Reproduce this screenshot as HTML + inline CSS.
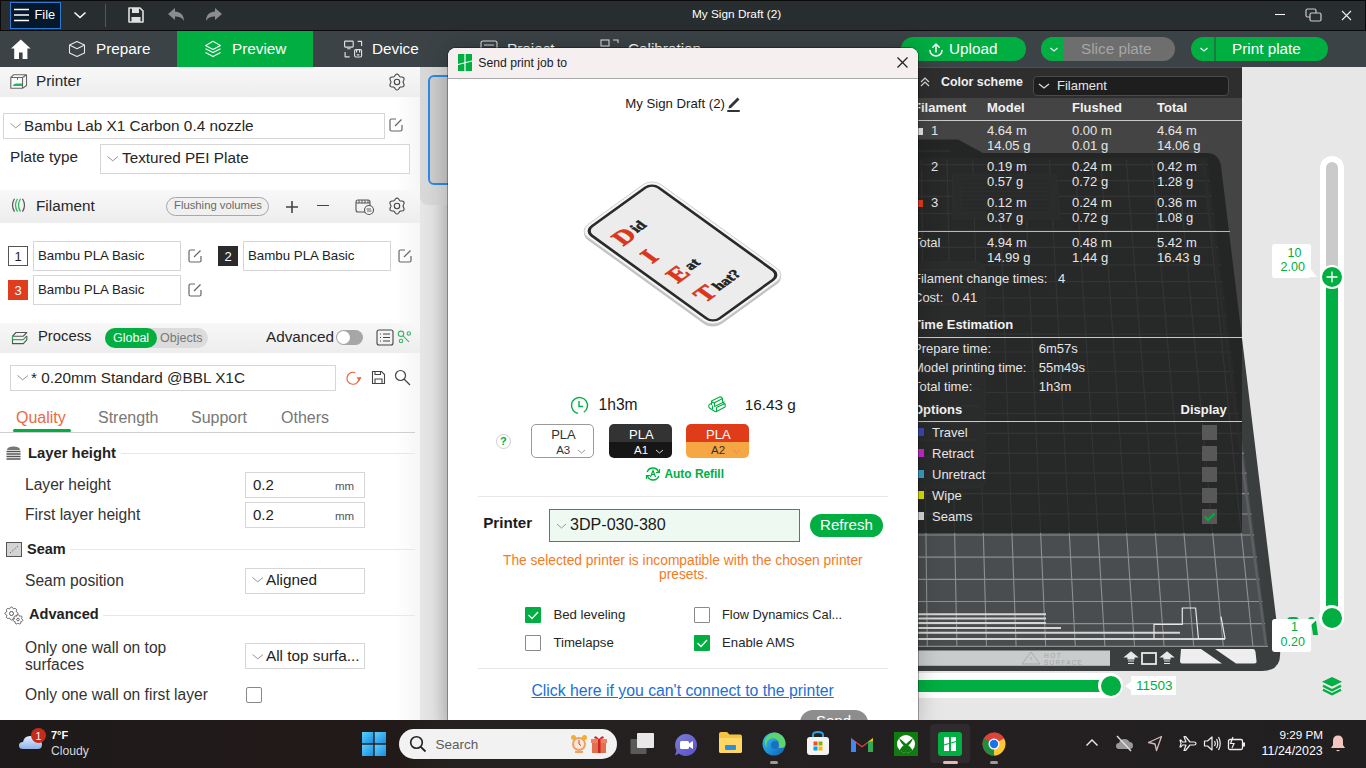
<!DOCTYPE html>
<html><head><meta charset="utf-8">
<style>
*{box-sizing:border-box;margin:0;padding:0}
html,body{width:1366px;height:768px;overflow:hidden;background:#e7e7e7;font-family:"Liberation Sans",sans-serif;}
.a{position:absolute}
.t{position:absolute;white-space:nowrap;line-height:1}
#titlebar{left:0;top:0;width:1366px;height:31px;background:#282d2f;box-shadow:inset 1px 1px 0 #0a0a0a,inset -1px -1px 0 #0a0a0a}
#nav{left:0;top:31px;width:1366px;height:36px;background:#3b4346}
#left{left:0;top:67px;width:420px;height:653px;background:#fff}
#canvas{left:0;top:0;width:1366px;height:720px;background:#e7e7e7;overflow:hidden}
#dialog{left:448px;top:48px;width:470px;height:680px;background:#fff;border-radius:8px 8px 0 0;overflow:hidden;box-shadow:0 0 0 1px rgba(0,0,0,0.3),0 0 24px rgba(0,0,0,0.22)}
#taskbar{left:0;top:720px;width:1366px;height:48px;background:linear-gradient(90deg,#1e1a1b 0%,#221a1a 18%,#221a19 29%,#252120 33%,#242021 60%,#221f21 100%)}
.hdr{background:#f3f3f3}
.box{position:absolute;border:1px solid #d0d0d0;background:#fff}
</style></head><body>
<div id="canvas" class="a">
<div class="a" style="left:420px;top:67px;width:40px;height:138px;background:#d8d8d8;border-radius:0 0 0 8px"></div>
<div class="a" style="left:428px;top:75px;width:40px;height:110px;border:2px solid #2b8ae8;border-radius:6px;background:linear-gradient(90deg,#cfcfcf,#bdbdbd)"></div>
<div class="a" style="left:420px;top:205px;width:28px;height:515px;background:linear-gradient(90deg,#e6e6e6 0%,#e3e3e3 50%,#cfcfcf 100%)"></div>
<svg class="a" style="left:0;top:0" width="1366" height="720">
<path d="M470 139.5 L958 139.5 L983 153 L1206 153 Q1219 153 1221 166 L1280 650 Q1282 671 1262 671 L470 671 Z" fill="#3b3e3f"/><line x1="470" y1="151" x2="950" y2="151" stroke="#8e9090" stroke-width="1.2"/>
<path d="M470 158 L1207 158 L1268 646.5 L470 646.5 Z" fill="#4a4d4f"/>
<line x1="470" y1="164.6" x2="1207.8" y2="164.6" stroke="#8e9090" stroke-width="1.2"/>
<line x1="470" y1="180.6" x2="1209.8" y2="180.6" stroke="#8e9090" stroke-width="1.2"/>
<line x1="470" y1="196.3" x2="1211.8" y2="196.3" stroke="#8e9090" stroke-width="1.2"/>
<line x1="470" y1="213.5" x2="1213.9" y2="213.5" stroke="#8e9090" stroke-width="1.2"/>
<line x1="470" y1="230.5" x2="1216.1" y2="230.5" stroke="#8e9090" stroke-width="1.2"/>
<line x1="470" y1="247.3" x2="1218.2" y2="247.3" stroke="#8e9090" stroke-width="1.2"/>
<line x1="470" y1="265" x2="1220.4" y2="265" stroke="#8e9090" stroke-width="1.2"/>
<line x1="470" y1="281.7" x2="1222.4" y2="281.7" stroke="#8e9090" stroke-width="1.2"/>
<line x1="470" y1="298" x2="1224.5" y2="298" stroke="#8e9090" stroke-width="1.2"/>
<line x1="470" y1="316" x2="1226.7" y2="316" stroke="#8e9090" stroke-width="1.2"/>
<line x1="470" y1="334" x2="1229.0" y2="334" stroke="#8e9090" stroke-width="1.2"/>
<line x1="470" y1="352" x2="1231.2" y2="352" stroke="#8e9090" stroke-width="1.2"/>
<line x1="470" y1="371.5" x2="1233.7" y2="371.5" stroke="#8e9090" stroke-width="1.2"/>
<line x1="470" y1="392.5" x2="1236.3" y2="392.5" stroke="#8e9090" stroke-width="1.2"/>
<line x1="470" y1="413.5" x2="1238.9" y2="413.5" stroke="#8e9090" stroke-width="1.2"/>
<line x1="470" y1="433.4" x2="1241.4" y2="433.4" stroke="#8e9090" stroke-width="1.2"/>
<line x1="470" y1="453.3" x2="1243.9" y2="453.3" stroke="#8e9090" stroke-width="1.2"/>
<line x1="470" y1="473.2" x2="1246.4" y2="473.2" stroke="#8e9090" stroke-width="1.2"/>
<line x1="470" y1="493.6" x2="1248.9" y2="493.6" stroke="#8e9090" stroke-width="1.2"/>
<line x1="470" y1="514" x2="1251.5" y2="514" stroke="#8e9090" stroke-width="1.2"/>
<line x1="470" y1="535" x2="1254.1" y2="535" stroke="#8e9090" stroke-width="1.2"/>
<line x1="470" y1="557.2" x2="1256.8" y2="557.2" stroke="#8e9090" stroke-width="1.2"/>
<line x1="470" y1="579.4" x2="1259.6" y2="579.4" stroke="#8e9090" stroke-width="1.2"/>
<line x1="470" y1="601.5" x2="1262.4" y2="601.5" stroke="#8e9090" stroke-width="1.2"/>
<line x1="470" y1="623.6" x2="1265.1" y2="623.6" stroke="#8e9090" stroke-width="1.2"/>
<line x1="470" y1="646.3" x2="1268.0" y2="646.3" stroke="#8e9090" stroke-width="1.2"/>
<line x1="511.8" y1="160" x2="453.7" y2="646.3" stroke="#8e9090" stroke-width="1.1"/>
<line x1="537.4" y1="160" x2="483.3" y2="646.3" stroke="#8e9090" stroke-width="1.1"/>
<line x1="563.0" y1="160" x2="512.9" y2="646.3" stroke="#8e9090" stroke-width="1.1"/>
<line x1="588.6" y1="160" x2="542.5" y2="646.3" stroke="#8e9090" stroke-width="1.1"/>
<line x1="614.2" y1="160" x2="572.1" y2="646.3" stroke="#8e9090" stroke-width="1.1"/>
<line x1="639.8" y1="160" x2="601.7" y2="646.3" stroke="#8e9090" stroke-width="1.1"/>
<line x1="665.4" y1="160" x2="631.3" y2="646.3" stroke="#8e9090" stroke-width="1.1"/>
<line x1="691.0" y1="160" x2="660.9" y2="646.3" stroke="#8e9090" stroke-width="1.1"/>
<line x1="716.6" y1="160" x2="690.5" y2="646.3" stroke="#8e9090" stroke-width="1.1"/>
<line x1="742.2" y1="160" x2="720.1" y2="646.3" stroke="#8e9090" stroke-width="1.1"/>
<line x1="767.8" y1="160" x2="749.7" y2="646.3" stroke="#8e9090" stroke-width="1.1"/>
<line x1="793.4" y1="160" x2="779.3" y2="646.3" stroke="#8e9090" stroke-width="1.1"/>
<line x1="819.0" y1="160" x2="808.9" y2="646.3" stroke="#8e9090" stroke-width="1.1"/>
<line x1="844.6" y1="160" x2="838.5" y2="646.3" stroke="#8e9090" stroke-width="1.1"/>
<line x1="870.2" y1="160" x2="868.1" y2="646.3" stroke="#8e9090" stroke-width="1.1"/>
<line x1="895.8" y1="160" x2="897.7" y2="646.3" stroke="#8e9090" stroke-width="1.1"/>
<line x1="921.4" y1="160" x2="927.3" y2="646.3" stroke="#8e9090" stroke-width="1.1"/>
<line x1="947.1" y1="160" x2="956.9" y2="646.3" stroke="#8e9090" stroke-width="1.1"/>
<line x1="972.7" y1="160" x2="986.5" y2="646.3" stroke="#8e9090" stroke-width="1.1"/>
<line x1="998.3" y1="160" x2="1016.1" y2="646.3" stroke="#8e9090" stroke-width="1.1"/>
<line x1="1023.9" y1="160" x2="1045.7" y2="646.3" stroke="#8e9090" stroke-width="1.1"/>
<line x1="1049.5" y1="160" x2="1075.3" y2="646.3" stroke="#8e9090" stroke-width="1.1"/>
<line x1="1075.1" y1="160" x2="1104.9" y2="646.3" stroke="#8e9090" stroke-width="1.1"/>
<line x1="1100.7" y1="160" x2="1134.5" y2="646.3" stroke="#8e9090" stroke-width="1.1"/>
<line x1="1126.3" y1="160" x2="1164.1" y2="646.3" stroke="#8e9090" stroke-width="1.1"/>
<line x1="1151.9" y1="160" x2="1193.7" y2="646.3" stroke="#8e9090" stroke-width="1.1"/>
<line x1="1177.5" y1="160" x2="1223.3" y2="646.3" stroke="#8e9090" stroke-width="1.1"/>
<line x1="1203.1" y1="160" x2="1252.9" y2="646.3" stroke="#8e9090" stroke-width="1.1"/>
<path d="M1203 160 L1266 646" stroke="#5d6061" stroke-width="2.5"/>
<path d="M952.5 174.7 H1056.4 L1060 219 H953Z" fill="#5c5f60" stroke="#6e7172"/><rect x="962" y="180" width="88" height="33" fill="#505354"/><line x1="962" y1="183.0" x2="1050" y2="183.0" stroke="#6a6d6e" stroke-width="1"/><line x1="962" y1="187.2" x2="1050" y2="187.2" stroke="#6a6d6e" stroke-width="1"/><line x1="962" y1="191.4" x2="1050" y2="191.4" stroke="#6a6d6e" stroke-width="1"/><line x1="962" y1="195.6" x2="1050" y2="195.6" stroke="#6a6d6e" stroke-width="1"/><line x1="962" y1="199.8" x2="1050" y2="199.8" stroke="#6a6d6e" stroke-width="1"/><line x1="962" y1="204.0" x2="1050" y2="204.0" stroke="#6a6d6e" stroke-width="1"/><line x1="962" y1="208.2" x2="1050" y2="208.2" stroke="#6a6d6e" stroke-width="1"/><line x1="962" y1="212.4" x2="1050" y2="212.4" stroke="#6a6d6e" stroke-width="1"/>
<path d="M880 262 H975 Q985 262 985 272 V478 Q985 488 975 488 H880Z" fill="#5c5f60" stroke="#727576"/>
<line x1="880" y1="270" x2="980" y2="270" stroke="#74777a" stroke-width="1.5"/>
<line x1="880" y1="287" x2="980" y2="287" stroke="#74777a" stroke-width="1.5"/>
<line x1="880" y1="304" x2="980" y2="304" stroke="#74777a" stroke-width="1.5"/>
<line x1="880" y1="321" x2="980" y2="321" stroke="#74777a" stroke-width="1.5"/>
<line x1="880" y1="338" x2="980" y2="338" stroke="#74777a" stroke-width="1.5"/>
<line x1="880" y1="355" x2="980" y2="355" stroke="#74777a" stroke-width="1.5"/>
<line x1="880" y1="372" x2="980" y2="372" stroke="#74777a" stroke-width="1.5"/>
<line x1="880" y1="389" x2="980" y2="389" stroke="#74777a" stroke-width="1.5"/>
<line x1="880" y1="406" x2="980" y2="406" stroke="#74777a" stroke-width="1.5"/>
<line x1="880" y1="423" x2="980" y2="423" stroke="#74777a" stroke-width="1.5"/>
<line x1="880" y1="440" x2="980" y2="440" stroke="#74777a" stroke-width="1.5"/>
<line x1="880" y1="457" x2="980" y2="457" stroke="#74777a" stroke-width="1.5"/>
<line x1="470" y1="614.3" x2="1046" y2="614.3" stroke="#d6d6d6" stroke-width="2"/>
<line x1="470" y1="618.4" x2="1046" y2="618.4" stroke="#d6d6d6" stroke-width="2"/>
<line x1="470" y1="622.9" x2="1046" y2="622.9" stroke="#d6d6d6" stroke-width="2"/>
<line x1="470" y1="628" x2="1061" y2="628" stroke="#d6d6d6" stroke-width="2"/>
<line x1="470" y1="632.8" x2="1180" y2="632.8" stroke="#d6d6d6" stroke-width="2"/>
<line x1="470" y1="639" x2="1225" y2="639" stroke="#d6d6d6" stroke-width="2"/>
<path d="M1154 639 V624.3 H1182.3 V608 H1195.6 L1198.4 638.5 H1225 L1221 616.6" stroke="#e6e6e6" stroke-width="1.2" fill="none"/>
<rect x="470" y="650.5" width="640" height="15.3" fill="#c9cbcc"/>
<path d="M1022 664 L1031 652 L1040 664Z" stroke="#a0a3a4" stroke-width="0.8" fill="none"/><path d="M1031 657V660" stroke="#a0a3a4" stroke-width="0.8"/>
<text x="1044" y="657.5" font-family="Liberation Sans" font-size="6.5" fill="#a3a6a7" letter-spacing="1.5">HOT</text><text x="1044" y="664.5" font-family="Liberation Sans" font-size="6.5" fill="#a3a6a7" letter-spacing="1.2">SURFACE</text>
<path d="M1125 657 L1131 652 L1137 657 H1134 V659 H1128 V657Z M1128 661H1134 M1128 663.5H1134" stroke="#e8e8e8" stroke-width="1.2" fill="#e8e8e8"/>
<rect x="1142" y="653" width="14" height="11" stroke="#e8e8e8" stroke-width="1.8" fill="none"/>
<path d="M1161 657 L1167 652 L1173 657 H1170 V659 H1164 V657Z M1164 661H1170 M1164 663.5H1170" stroke="#e8e8e8" stroke-width="1.2" fill="#e8e8e8"/>
<path d="M1181 649 H1201 L1222 663.5 H1182 Q1180 663.5 1180 661Z" fill="#eeeeee"/>
<path d="M1215 649 H1253 Q1255 649 1255.5 652 L1256.5 661 Q1257 663.5 1254 663.5 H1236Z" fill="#eeeeee"/>
</svg>
<div class="a" style="left:900px;top:673px;width:222px;height:25px;border-radius:0 13px 13px 0;background:#fff"></div>
<div class="a" style="left:900px;top:680px;width:212px;height:12px;background:#00ae42"></div>
<div class="a" style="left:1098px;top:673px;width:25px;height:25px;border-radius:50%;background:#fff"></div>
<div class="a" style="left:1100.5px;top:675.5px;width:20px;height:20px;border-radius:50%;background:#00ae42"></div>
<div class="a" style="left:1131px;top:676px;width:45px;height:19px;background:#fff"></div>
<svg class="a" style="left:1125px;top:681px" width="7" height="10"><path d="M0 5L7 0V10Z" fill="#fff"/></svg>
<div class="t" style="left:1136px;top:678.6px;font-size:13.5px;color:#00ae42;font-weight:400;">11503</div>
<div class="a" style="left:1320px;top:156px;width:24px;height:474px;border-radius:12px;background:#fff"></div>
<div class="a" style="left:1326px;top:162px;width:12px;height:120px;border-radius:6px 6px 0 0;background:#cacaca"></div>
<div class="a" style="left:1326px;top:277px;width:12px;height:341px;background:#00ae42"></div>
<div class="a" style="left:1320px;top:265px;width:24px;height:24px;border-radius:50%;background:#fff"></div>
<div class="a" style="left:1322px;top:267px;width:20px;height:20px;border-radius:50%;background:#00ae42"></div>
<svg class="a" style="left:1325px;top:270px" width="14" height="14"><path d="M7 1.5V12.5M1.5 7H12.5" stroke="#fff" stroke-width="1.3"/></svg>
<div class="a" style="left:1319px;top:605px;width:25px;height:25px;border-radius:50%;background:#fff"></div>
<div class="a" style="left:1321.5px;top:607.5px;width:20px;height:20px;border-radius:50%;background:#00ae42"></div>
<div class="a" style="left:1272px;top:243.7px;width:39px;height:34px;background:#fff;border-radius:3px"></div>
<svg class="a" style="left:1306px;top:268px" width="12" height="12"><path d="M0 0H4L11 9H0Z" fill="#fff"/></svg>
<div class="t" style="left:1287.5px;top:246.5px;font-size:12.5px;color:#00ae42;font-weight:400;">10</div>
<div class="t" style="left:1280.5px;top:261.3px;font-size:12.5px;color:#00ae42;font-weight:400;">2.00</div>
<div class="a" style="left:1287px;top:616.5px;width:12px;height:4px;border-radius:6px 6px 0 0;background:#00ae42"></div>
<div class="a" style="left:1308px;top:617px;width:7px;height:4px;border-radius:6px 6px 0 0;background:#00ae42"></div>
<svg class="a" style="left:1310px;top:620px" width="9" height="16"><path d="M1 1L6 0.5L8 15H3Z" fill="#00ae42"/></svg>
<div class="a" style="left:1272px;top:619px;width:39px;height:33px;background:#fff;border-radius:3px"></div>
<svg class="a" style="left:1309px;top:618px" width="10" height="10"><path d="M0 1L9 0.5L1 8Z" fill="#fff"/></svg>
<div class="t" style="left:1291px;top:621.0px;font-size:12.5px;color:#00ae42;font-weight:400;">1</div>
<div class="t" style="left:1280.5px;top:636.0px;font-size:12.5px;color:#00ae42;font-weight:400;">0.20</div>
<svg class="a" style="left:1321px;top:675px" width="22" height="22"><path d="M11 2L21 6.8L11 11.6L1 6.8Z" fill="#00ae42"/><path d="M2 10.8L11 15.3L20 10.8 M2 14.8L11 19.3L20 14.8" stroke="#00ae42" stroke-width="2.4" fill="none" stroke-linejoin="round"/></svg>
</div>
<div id="titlebar" class="a">
 <div class="a" style="left:10px;top:2px;width:51px;height:27px;border:1px solid #2a7ad6;background:#06182b"></div>
 <svg class="a" style="left:13px;top:7px" width="18" height="16"><path d="M1 2.5H16M1 8H16M1 13.5H16" stroke="#fff" stroke-width="1.6"/></svg>
 <div class="t" style="left:34.5px;top:9px;font-size:12.8px;color:#fff">File</div>
 <svg class="a" style="left:73px;top:10px" width="14" height="10"><path d="M1.5 2.5L7 7.5L12.5 2.5" stroke="#fff" stroke-width="1.5" fill="none"/></svg>
 <div class="a" style="left:105px;top:4px;width:1px;height:23px;background:#555"></div>
 <svg class="a" style="left:127px;top:6px" width="18" height="18"><path d="M2 2H13L16 5V16H2Z" stroke="#e0e0e0" stroke-width="1.6" fill="none" stroke-linejoin="round"/><rect x="5" y="2" width="7" height="5" fill="#e0e0e0"/><rect x="4.5" y="11" width="9" height="5" fill="#e0e0e0"/></svg>
 <svg class="a" style="left:167px;top:7px" width="18" height="16"><path d="M1 7L8 1V4.5C13 4.5 17 8 17 14C15 10.5 12 9.5 8 9.5V13Z" fill="#8a8d8f"/></svg>
 <svg class="a" style="left:205px;top:7px" width="18" height="16"><path d="M17 7L10 1V4.5C5 4.5 1 8 1 14C3 10.5 6 9.5 10 9.5V13Z" fill="#8a8d8f"/></svg>
 <div class="t" style="left:692px;top:9px;font-size:11.8px;color:#fff">My Sign Draft (2)</div>
 <div class="a" style="left:1275px;top:14px;width:10px;height:1px;background:#fff"></div>
 <svg class="a" style="left:1305px;top:8px" width="18" height="14"><rect x="1" y="1" width="10" height="8" rx="1.5" stroke="#ccc" stroke-width="1.2" fill="none"/><rect x="5" y="5" width="11" height="8" rx="1.5" stroke="#ccc" stroke-width="1.2" fill="#2b2f31"/></svg>
 <svg class="a" style="left:1341px;top:10px" width="11" height="11"><path d="M1 1L10 10M10 1L1 10" stroke="#eee" stroke-width="1.1"/></svg>
</div>
<div id="nav" class="a">
 <svg class="a" style="left:10px;top:7px" width="22" height="22"><path d="M10.8 1.5L1 10.5H4.2V21H9V14.5H12.6V21H17.4V10.5H20.6Z" fill="#fff"/></svg>
 <svg class="a" style="left:68px;top:9px" width="18" height="18"><path d="M9 1.5L16.5 5V13L9 16.5L1.5 13V5Z M1.5 5L9 8.8L16.5 5" stroke="#e8e8e8" stroke-width="1.1" fill="none" stroke-linejoin="round"/></svg>
 <div class="t" style="left:96px;top:10px;font-size:15.3px;color:#fff">Prepare</div>
 <div class="a" style="left:177px;top:0;width:136px;height:36px;background:#00ae42"></div>
 <svg class="a" style="left:204px;top:8px" width="18" height="20"><path d="M9 2.2L16.5 6.6L9 10.6L1.5 6.6Z M1.5 9.8L9 13.6L16.5 9.8 M1.5 13.5L9 17.6L16.5 13.5" stroke="#fff" stroke-width="1.1" fill="none" stroke-linejoin="round"/></svg>
 <div class="t" style="left:232px;top:10px;font-size:15.3px;color:#fff">Preview</div>
 <svg class="a" style="left:343px;top:8px" width="20" height="20"><g stroke="#e2e2e2" stroke-width="1.15" fill="none" stroke-linejoin="round"><rect x="1.6" y="2.1" width="8.6" height="6" rx="0.8"/><path d="M4.2 9.7H7.6 M14.6 2.4H18.6V7 M2.1 13V17.8H6.6"/><rect x="11.6" y="10.6" width="7" height="7.4" rx="1.2"/><path d="M13.6 11V13.6 M16.6 11V13.6 M13.8 15.9H16.4"/></g></svg>
 <div class="t" style="left:372px;top:10px;font-size:15.3px;color:#fff">Device</div>
 <svg class="a" style="left:480px;top:9px" width="20" height="18"><rect x="1" y="1" width="16" height="14" rx="2" stroke="#ddd" stroke-width="1.1" fill="none"/><path d="M4 5H14M4 9H14" stroke="#ddd" stroke-width="1.1"/></svg>
 <div class="t" style="left:507px;top:10px;font-size:15.3px;color:#fff">Project</div>
 <svg class="a" style="left:600px;top:8px" width="20" height="20"><rect x="1" y="1" width="8" height="6" stroke="#ddd" stroke-width="1.1" fill="none"/><path d="M13 1H18V4 M1 14V19H5" stroke="#ddd" stroke-width="1.1" fill="none"/></svg>
 <div class="t" style="left:628px;top:10px;font-size:15.3px;color:#fff">Calibration</div>
 <div class="a" style="left:901px;top:6px;width:125px;height:24px;border-radius:12px;background:#00ae42"></div>
 <svg class="a" style="left:928px;top:9px" width="16" height="18"><path d="M8 4V12 M4.8 7.2L8 4L11.2 7.2 M2 10.5A6 5.5 0 0 0 14 10.5" stroke="#fff" stroke-width="1.5" fill="none" stroke-linecap="round"/></svg>
 <div class="t" style="left:949px;top:10px;font-size:15.3px;color:#fff">Upload</div>
 <div class="a" style="left:1041px;top:6px;width:134px;height:24px;border-radius:12px;background:#6e6e6e;overflow:hidden"><div class="a" style="left:0;top:0;width:23px;height:24px;background:#00ae42"></div></div>
 <svg class="a" style="left:1048.5px;top:15.5px" width="10" height="6"><path d="M1.5 1L5 4L8.5 1" stroke="#fff" stroke-width="1.1" fill="none"/></svg>
 <div class="t" style="left:1081px;top:10px;font-size:15.3px;color:#a6a6a6">Slice plate</div>
 <div class="a" style="left:1191px;top:6px;width:137px;height:24px;border-radius:12px;background:#00ae42"></div>
 <div class="a" style="left:1214px;top:6px;width:2px;height:24px;background:#1e7a40"></div>
 <svg class="a" style="left:1198.5px;top:15.5px" width="10" height="6"><path d="M1.5 1L5 4L8.5 1" stroke="#fff" stroke-width="1.1" fill="none"/></svg>
 <div class="t" style="left:1232px;top:10px;font-size:15.3px;color:#fff">Print plate</div>
</div>
<div id="left" class="a">
<div class="a" style="left:395px;top:0;width:25px;height:653px;background:linear-gradient(90deg,#fff,#f6f6f6)"></div>
<div class="a" style="left:0;top:0;width:420px;height:30px;background:linear-gradient(180deg,#f8f8f8,#ededed)"></div>
<svg class="a" style="left:9.5px;top:6.5px" width="18" height="16"><path d="M0.8 3.5H12.5V14.2H0.8Z M0.8 3.5L3.5 0.8H16.5L12.5 3.5 M16.5 0.8V11.5L12.5 14.2" stroke="#666" stroke-width="1.1" fill="#fafafa" stroke-linejoin="round"/><path d="M7.5 3.5V5.8" stroke="#666" stroke-width="1"/><path d="M2.6 12Q3.8 9.6 6.5 9.6H12V12Z" fill="#1db954"/></svg>
<div class="t" style="left:36px;top:5.8px;font-size:15.3px;color:#262626;font-weight:400;">Printer</div>
<svg class="a" style="left:388px;top:6px" width="18" height="18"><path d="M9.00 1.05 L9.68 1.21 L10.30 1.64 L10.81 2.24 L11.23 2.87 L11.61 3.40 L12.02 3.76 L12.54 3.94 L13.19 4.00 L13.95 4.05 L14.73 4.20 L15.41 4.51 L15.88 5.02 L16.09 5.69 L16.02 6.44 L15.76 7.19 L15.43 7.87 L15.15 8.46 L15.05 9.00 L15.15 9.54 L15.43 10.13 L15.76 10.81 L16.02 11.56 L16.09 12.31 L15.88 12.97 L15.41 13.49 L14.73 13.80 L13.95 13.95 L13.19 14.00 L12.54 14.06 L12.03 14.24 L11.61 14.60 L11.23 15.13 L10.81 15.76 L10.30 16.36 L9.68 16.79 L9.00 16.95 L8.32 16.79 L7.70 16.36 L7.19 15.76 L6.77 15.13 L6.39 14.60 L5.97 14.24 L5.46 14.06 L4.81 14.00 L4.05 13.95 L3.27 13.80 L2.59 13.49 L2.12 12.98 L1.91 12.31 L1.98 11.56 L2.24 10.81 L2.57 10.13 L2.85 9.54 L2.95 9.00 L2.85 8.46 L2.57 7.87 L2.24 7.19 L1.98 6.44 L1.91 5.69 L2.12 5.03 L2.59 4.51 L3.27 4.20 L4.05 4.05 L4.81 4.00 L5.46 3.94 L5.98 3.76 L6.39 3.40 L6.77 2.87 L7.19 2.24 L7.70 1.64 L8.32 1.21 L9.00 1.05Z" stroke="#444" stroke-width="1.1" fill="none"/><circle cx="9" cy="9" r="2.7" stroke="#444" stroke-width="1.1" fill="none"/></svg>
<div class="box" style="left:3px;top:46px;width:382px;height:26px;border-color:#d6d6d6"></div>
<svg class="a" style="left:10.0px;top:56.1px" width="12" height="6"><path d="M0.5 0.5L5.75 4.8L11 0.5" stroke="#8a8a8a" stroke-width="0.9" fill="none"/></svg>
<div class="t" style="left:24px;top:50.9px;font-size:15.3px;color:#262626;font-weight:400;">Bambu Lab X1 Carbon 0.4 nozzle</div>
<svg class="a" style="left:388px;top:50px" width="16" height="16"><path d="M8 2H3.5Q2 2 2 3.5V12.5Q2 14 3.5 14H12.5Q14 14 14 12.5V8" stroke="#666" stroke-width="1.2" fill="none"/><path d="M7 9L13.5 2.5" stroke="#666" stroke-width="1.2"/></svg>
<div class="t" style="left:10px;top:82.3px;font-size:15.3px;color:#262626;font-weight:400;">Plate type</div>
<div class="box" style="left:100px;top:77px;width:310px;height:30px;border-color:#d6d6d6"></div>
<svg class="a" style="left:106.5px;top:89.1px" width="12" height="6"><path d="M0.5 0.5L5.75 4.8L11 0.5" stroke="#8a8a8a" stroke-width="0.9" fill="none"/></svg>
<div class="t" style="left:122px;top:82.5px;font-size:15.3px;color:#262626;font-weight:400;">Textured PEI Plate</div>
<div class="a" style="left:0;top:123px;width:420px;height:33px;background:linear-gradient(180deg,#f8f8f8,#ededed)"></div>
<svg class="a" style="left:11px;top:131px" width="16" height="15"><g fill="none" stroke-width="1.2"><path d="M3.5 0.8Q-0.5 7.2 3.5 13.6" stroke="#555"/><path d="M6.5 0.8Q2.5 7.2 6.5 13.6" stroke="#2db45a"/><path d="M9.5 0.8Q5.5 7.2 9.5 13.6" stroke="#2db45a"/><path d="M11.5 0.8Q15.5 7.2 11.5 13.6" stroke="#555"/><path d="M3.5 0.8H11.5 M3.5 13.6H11.5" stroke="#555" stroke-width="0.6" opacity="0.0"/></g></svg>
<div class="t" style="left:36px;top:130.8px;font-size:15.3px;color:#262626;font-weight:400;">Filament</div>
<div class="a" style="left:166px;top:130px;width:103px;height:19px;border:1px solid #a8a8a8;border-radius:10px;background:#f0f0f0"></div>
<div class="t" style="left:174px;top:133.3px;font-size:11.3px;color:#6a6a6a;font-weight:400;">Flushing volumes</div>
<svg class="a" style="left:285px;top:132.5px" width="14" height="14"><path d="M7 1V13M1 7H13" stroke="#444" stroke-width="1.6"/></svg>
<div class="a" style="left:317px;top:138px;width:12px;height:1.3px;background:#444"></div>
<svg class="a" style="left:355px;top:131px" width="20" height="18"><rect x="1" y="2" width="14" height="12" rx="2" stroke="#555" stroke-width="1.1" fill="none"/><path d="M1 5H15 M4 2V5 M7 2V5 M10 2V5 M13 2V5" stroke="#555" stroke-width="1"/><circle cx="14" cy="12" r="4.5" stroke="#555" stroke-width="1.1" fill="#f3f3f3"/><path d="M11.5 11H16 M12 13H16.5" stroke="#555" stroke-width="0.9"/></svg>
<svg class="a" style="left:388px;top:130px" width="18" height="18"><path d="M9.00 1.05 L9.68 1.21 L10.30 1.64 L10.81 2.24 L11.23 2.87 L11.61 3.40 L12.02 3.76 L12.54 3.94 L13.19 4.00 L13.95 4.05 L14.73 4.20 L15.41 4.51 L15.88 5.02 L16.09 5.69 L16.02 6.44 L15.76 7.19 L15.43 7.87 L15.15 8.46 L15.05 9.00 L15.15 9.54 L15.43 10.13 L15.76 10.81 L16.02 11.56 L16.09 12.31 L15.88 12.97 L15.41 13.49 L14.73 13.80 L13.95 13.95 L13.19 14.00 L12.54 14.06 L12.03 14.24 L11.61 14.60 L11.23 15.13 L10.81 15.76 L10.30 16.36 L9.68 16.79 L9.00 16.95 L8.32 16.79 L7.70 16.36 L7.19 15.76 L6.77 15.13 L6.39 14.60 L5.97 14.24 L5.46 14.06 L4.81 14.00 L4.05 13.95 L3.27 13.80 L2.59 13.49 L2.12 12.98 L1.91 12.31 L1.98 11.56 L2.24 10.81 L2.57 10.13 L2.85 9.54 L2.95 9.00 L2.85 8.46 L2.57 7.87 L2.24 7.19 L1.98 6.44 L1.91 5.69 L2.12 5.03 L2.59 4.51 L3.27 4.20 L4.05 4.05 L4.81 4.00 L5.46 3.94 L5.98 3.76 L6.39 3.40 L6.77 2.87 L7.19 2.24 L7.70 1.64 L8.32 1.21 L9.00 1.05Z" stroke="#444" stroke-width="1.1" fill="none"/><circle cx="9" cy="9" r="2.7" stroke="#444" stroke-width="1.1" fill="none"/></svg>
<div class="a" style="left:8px;top:179px;width:20px;height:20px;background:#fff;border:1px solid #555;color:#222;font-size:13px;text-align:center;line-height:19px">1</div>
<div class="box" style="left:33px;top:174px;width:148px;height:30px;border-color:#d6d6d6"></div>
<div class="t" style="left:38px;top:182.2px;font-size:13.3px;color:#222;font-weight:400;">Bambu PLA Basic</div>
<svg class="a" style="left:187px;top:181px" width="16" height="16"><path d="M8 2H3.5Q2 2 2 3.5V12.5Q2 14 3.5 14H12.5Q14 14 14 12.5V8" stroke="#666" stroke-width="1.2" fill="none"/><path d="M7 9L13.5 2.5" stroke="#666" stroke-width="1.2"/></svg>
<div class="a" style="left:218px;top:179px;width:20px;height:20px;background:#2b2b2b;border:none;color:#fff;font-size:13px;text-align:center;line-height:21px">2</div>
<div class="box" style="left:243px;top:174px;width:148px;height:30px;border-color:#d6d6d6"></div>
<div class="t" style="left:248px;top:182.2px;font-size:13.3px;color:#222;font-weight:400;">Bambu PLA Basic</div>
<svg class="a" style="left:397px;top:181px" width="16" height="16"><path d="M8 2H3.5Q2 2 2 3.5V12.5Q2 14 3.5 14H12.5Q14 14 14 12.5V8" stroke="#666" stroke-width="1.2" fill="none"/><path d="M7 9L13.5 2.5" stroke="#666" stroke-width="1.2"/></svg>
<div class="a" style="left:8px;top:213px;width:20px;height:20px;background:#e03c1e;border:none;color:#fff;font-size:13px;text-align:center;line-height:21px">3</div>
<div class="box" style="left:33px;top:208px;width:148px;height:30px;border-color:#d6d6d6"></div>
<div class="t" style="left:38px;top:216.2px;font-size:13.3px;color:#222;font-weight:400;">Bambu PLA Basic</div>
<svg class="a" style="left:187px;top:215px" width="16" height="16"><path d="M8 2H3.5Q2 2 2 3.5V12.5Q2 14 3.5 14H12.5Q14 14 14 12.5V8" stroke="#666" stroke-width="1.2" fill="none"/><path d="M7 9L13.5 2.5" stroke="#666" stroke-width="1.2"/></svg>
<div class="a" style="left:0;top:256px;width:420px;height:30px;background:linear-gradient(180deg,#f8f8f8,#ededed)"></div>
<svg class="a" style="left:10.5px;top:263.5px" width="18" height="15"><g fill="none" stroke-linejoin="round" stroke-width="1.1"><path d="M1.5 5.2L5 1.5H15.8L12.3 5.2Z" stroke="#555"/><path d="M1.5 5.2V8.6H12.3L15.8 4.9" stroke="#1db954" stroke-width="1.3"/><path d="M1.5 8.6V12.6H12.3L15.8 8.9V5" stroke="#555"/></g></svg>
<div class="t" style="left:38px;top:261.7px;font-size:14.8px;color:#262626;font-weight:400;">Process</div>
<div class="a" style="left:105px;top:260.7px;width:103px;height:20.5px;border-radius:10.5px;background:#dcdcdc"></div>
<div class="a" style="left:105px;top:260.7px;width:52px;height:20.5px;border-radius:10.5px;background:#00ae42"></div>
<div class="t" style="left:113px;top:265.4px;font-size:12.5px;color:#fff;font-weight:400;">Global</div>
<div class="t" style="left:160px;top:265.4px;font-size:12.5px;color:#777;font-weight:400;">Objects</div>
<div class="t" style="left:266px;top:261.7px;font-size:15.3px;color:#262626;font-weight:400;">Advanced</div>
<div class="a" style="left:336px;top:263px;width:27px;height:15px;border-radius:8px;background:#a6a6a6"></div>
<div class="a" style="left:337px;top:264px;width:13px;height:13px;border-radius:7px;background:#fff"></div>
<svg class="a" style="left:376px;top:262px" width="18" height="17"><rect x="1" y="1" width="16" height="15" rx="2" stroke="#444" stroke-width="1.1" fill="none"/><path d="M4 5H5M4 8.5H5M4 12H5M7 5H14M7 8.5H14M7 12H14" stroke="#444" stroke-width="1.1"/></svg>
<svg class="a" style="left:396px;top:262px" width="16" height="16"><g stroke="#3cb46a" stroke-width="1.1" fill="none"><circle cx="5" cy="4.8" r="2.7"/><circle cx="12.8" cy="4.5" r="1.7"/><circle cx="5" cy="12" r="1.7"/><path d="M7 6.8L13 12.8"/></g></svg>
<div class="box" style="left:10px;top:298px;width:326px;height:26px;border-color:#d6d6d6"></div>
<svg class="a" style="left:16.5px;top:308.0px" width="12" height="6"><path d="M0.5 0.5L5.75 4.8L11 0.5" stroke="#8a8a8a" stroke-width="0.9" fill="none"/></svg>
<div class="t" style="left:31px;top:302.5px;font-size:15.3px;color:#262626;font-weight:400;">* 0.20mm Standard @BBL X1C</div>
<svg class="a" style="left:345px;top:303px" width="18" height="16"><path d="M14 8A6 6 0 1 1 10 2.6" stroke="#e8643a" stroke-width="1.2" fill="none"/><path d="M11.5 7.5L14.5 11L16.5 7" fill="#e8643a"/></svg>
<svg class="a" style="left:371px;top:303px" width="15" height="15"><path d="M1.5 1.5H10.5L13.5 4.5V13.5H1.5Z" stroke="#444" stroke-width="1.1" fill="none"/><path d="M4 1.5V4.5H9.5V1.5 M4 13.5V9H11V13.5" stroke="#444" stroke-width="1.1" fill="none"/></svg>
<svg class="a" style="left:394px;top:302px" width="17" height="17"><circle cx="6.5" cy="6.5" r="5" stroke="#444" stroke-width="1.2" fill="none"/><path d="M10 10L16 16" stroke="#444" stroke-width="1.3"/></svg>
<div class="t" style="left:16px;top:343.4px;font-size:16px;color:#ea6a3f;font-weight:400;">Quality</div>
<div class="a" style="left:13px;top:362px;width:58px;height:3px;border-radius:2px;background:#00ae42"></div>
<div class="t" style="left:98px;top:343.4px;font-size:16px;color:#777;font-weight:400;">Strength</div>
<div class="t" style="left:191px;top:343.4px;font-size:16px;color:#777;font-weight:400;">Support</div>
<div class="t" style="left:281px;top:343.4px;font-size:16px;color:#777;font-weight:400;">Others</div>
<div class="a" style="left:0;top:365px;width:415px;height:1px;background:#cfcfcf"></div>
<svg class="a" style="left:5px;top:378px" width="17" height="16"><path d="M2 5Q2 1.5 8.5 1.5Q15 1.5 15 5Z" fill="#777"/><path d="M1.5 6.5H15.5M1.5 9H15.5M1.5 11.5H15.5M1.5 14H15.5" stroke="#555" stroke-width="1.5"/></svg>
<div class="t" style="left:28px;top:378.9px;font-size:14.8px;color:#222;font-weight:700;">Layer height</div>
<div class="a" style="left:121px;top:386px;width:294px;height:1px;background:#e8e8e8"></div>
<div class="t" style="left:25px;top:410.4px;font-size:15.6px;color:#333;font-weight:400;">Layer height</div>
<div class="t" style="left:25px;top:439.8px;font-size:15.6px;color:#333;font-weight:400;">First layer height</div>
<div class="box" style="left:245px;top:405px;width:120px;height:26px;border-color:#d6d6d6"></div>
<div class="t" style="left:253px;top:410.3px;font-size:15px;color:#222;font-weight:400;">0.2</div>
<div class="t" style="left:335px;top:414.3px;font-size:11.5px;color:#555;font-weight:400;">mm</div>
<div class="box" style="left:245px;top:435px;width:120px;height:26px;border-color:#d6d6d6"></div>
<div class="t" style="left:253px;top:440.3px;font-size:15px;color:#222;font-weight:400;">0.2</div>
<div class="t" style="left:335px;top:444.3px;font-size:11.5px;color:#555;font-weight:400;">mm</div>
<svg class="a" style="left:6px;top:475px" width="16" height="15"><rect x="0.5" y="0.5" width="15" height="14" fill="#d4d4d4" stroke="#555"/><path d="M4 11L12 4" stroke="#666" stroke-width="1" stroke-dasharray="1.5 1.5"/></svg>
<div class="t" style="left:27px;top:474.7px;font-size:14.5px;color:#222;font-weight:700;">Seam</div>
<div class="a" style="left:70px;top:482px;width:345px;height:1px;background:#e8e8e8"></div>
<div class="t" style="left:25px;top:506.4px;font-size:15.6px;color:#333;font-weight:400;">Seam position</div>
<div class="box" style="left:245px;top:501px;width:120px;height:26px;border-color:#d6d6d6"></div>
<svg class="a" style="left:251.8px;top:510.0px" width="12" height="6"><path d="M0.5 0.5L5.75 4.8L11 0.5" stroke="#8a8a8a" stroke-width="0.9" fill="none"/></svg>
<div class="t" style="left:266px;top:505.0px;font-size:15.3px;color:#222;font-weight:400;">Aligned</div>
<svg class="a" style="left:4px;top:539px" width="20" height="19"><path d="M7.50 1.00 L7.92 1.07 L8.32 1.29 L8.67 1.63 L8.96 2.04 L9.20 2.48 L9.41 2.88 L9.84 2.75 L10.33 2.60 L10.83 2.52 L11.31 2.53 L11.75 2.66 L12.10 2.90 L12.34 3.25 L12.47 3.69 L12.48 4.17 L12.40 4.67 L12.25 5.16 L12.12 5.59 L12.52 5.80 L12.96 6.04 L13.37 6.33 L13.71 6.68 L13.93 7.08 L14.00 7.50 L13.93 7.92 L13.71 8.32 L13.37 8.67 L12.96 8.96 L12.52 9.20 L12.12 9.41 L12.25 9.84 L12.40 10.33 L12.48 10.83 L12.47 11.31 L12.34 11.75 L12.10 12.10 L11.75 12.34 L11.31 12.47 L10.83 12.48 L10.33 12.40 L9.84 12.25 L9.41 12.12 L9.20 12.52 L8.96 12.96 L8.67 13.37 L8.32 13.71 L7.92 13.93 L7.50 14.00 L7.08 13.93 L6.68 13.71 L6.33 13.37 L6.04 12.96 L5.80 12.52 L5.59 12.12 L5.16 12.25 L4.67 12.40 L4.17 12.48 L3.69 12.47 L3.25 12.34 L2.90 12.10 L2.66 11.75 L2.53 11.31 L2.52 10.83 L2.60 10.33 L2.75 9.84 L2.88 9.41 L2.48 9.20 L2.04 8.96 L1.63 8.67 L1.29 8.32 L1.07 7.92 L1.00 7.50 L1.07 7.08 L1.29 6.68 L1.63 6.33 L2.04 6.04 L2.48 5.80 L2.88 5.59 L2.75 5.16 L2.60 4.67 L2.52 4.17 L2.53 3.69 L2.66 3.25 L2.90 2.90 L3.25 2.66 L3.69 2.53 L4.17 2.52 L4.67 2.60 L5.16 2.75 L5.59 2.88 L5.80 2.48 L6.04 2.04 L6.33 1.63 L6.68 1.29 L7.08 1.07 L7.50 1.00Z" stroke="#555" stroke-width="1" fill="#fff"/><circle cx="7.5" cy="7.5" r="2" stroke="#555" stroke-width="1" fill="none"/><path d="M14.00 8.70 L14.36 8.76 L14.69 8.94 L14.98 9.22 L15.22 9.56 L15.40 9.93 L15.56 10.26 L15.92 10.18 L16.32 10.09 L16.74 10.07 L17.14 10.12 L17.48 10.27 L17.75 10.51 L17.93 10.82 L17.99 11.20 L17.96 11.59 L17.84 11.99 L17.67 12.37 L17.51 12.70 L17.79 12.93 L18.11 13.19 L18.39 13.50 L18.60 13.84 L18.70 14.21 L18.68 14.57 L18.54 14.90 L18.29 15.18 L17.96 15.41 L17.57 15.56 L17.17 15.66 L16.81 15.74 L16.81 16.11 L16.80 16.52 L16.74 16.93 L16.60 17.31 L16.38 17.61 L16.08 17.82 L15.74 17.92 L15.36 17.90 L14.98 17.78 L14.61 17.58 L14.29 17.33 L14.00 17.10 L13.71 17.33 L13.39 17.58 L13.02 17.78 L12.64 17.90 L12.26 17.92 L11.92 17.82 L11.62 17.61 L11.40 17.31 L11.26 16.93 L11.20 16.52 L11.19 16.11 L11.19 15.74 L10.83 15.66 L10.43 15.56 L10.04 15.41 L9.71 15.18 L9.46 14.90 L9.32 14.57 L9.30 14.21 L9.40 13.84 L9.61 13.50 L9.89 13.19 L10.21 12.93 L10.49 12.70 L10.33 12.37 L10.16 11.99 L10.04 11.59 L10.01 11.20 L10.07 10.82 L10.25 10.51 L10.52 10.27 L10.86 10.12 L11.26 10.07 L11.68 10.09 L12.08 10.18 L12.44 10.26 L12.60 9.93 L12.78 9.56 L13.02 9.22 L13.31 8.94 L13.64 8.76 L14.00 8.70Z" stroke="#555" stroke-width="1" fill="#fff"/><circle cx="14" cy="13.5" r="1.3" stroke="#555" stroke-width="0.9" fill="none"/></svg>
<div class="t" style="left:29px;top:540.3px;font-size:14.6px;color:#222;font-weight:700;">Advanced</div>
<div class="a" style="left:103px;top:548px;width:312px;height:1px;background:#e8e8e8"></div>
<div class="t" style="left:25px;top:572.5px;font-size:15.6px;color:#333;font-weight:400;">Only one wall on top</div>
<div class="t" style="left:25px;top:589.8px;font-size:15.6px;color:#333;font-weight:400;">surfaces</div>
<div class="box" style="left:245px;top:576px;width:120px;height:26px;border-color:#d6d6d6"></div>
<svg class="a" style="left:251.5px;top:586.5px" width="12" height="6"><path d="M0.5 0.5L5.75 4.8L11 0.5" stroke="#8a8a8a" stroke-width="0.9" fill="none"/></svg>
<div class="t" style="left:266px;top:580.6px;font-size:15.3px;color:#222;font-weight:400;">All top surfa...</div>
<div class="t" style="left:25px;top:620.4px;font-size:15.6px;color:#333;font-weight:400;">Only one wall on first layer</div>
<div class="a" style="left:246px;top:620px;width:16px;height:16px;border:1px solid #888;border-radius:2px"></div>
</div>
<div id="legend" class="a" style="left:918px;top:67px;width:324px;height:466px;background:rgba(32,32,32,0.82)">
<div class="a" style="left:0;top:0;width:324px;height:31px;background:rgba(0,0,0,0.32)"></div><div class="a" style="left:0;top:0;width:324px;height:1px;background:#4c4f54"></div>
<svg class="a" style="left:0;top:8px" width="14" height="14"><path d="M3 7L7 3L11 7 M3 11L7 7L11 11" stroke="#ddd" stroke-width="1.2" fill="none"/></svg>
<div class="t" style="left:23px;top:8.7px;font-size:12.4px;color:#f0f0f0;font-weight:700;">Color scheme</div>
<div class="a" style="left:114.5px;top:8.5px;width:196.5px;height:20px;border:1px solid #4a4a4a;border-radius:4px;background:#1e1e1e"></div>
<svg class="a" style="left:120px;top:16px" width="12" height="7"><path d="M1 1L6 5L11 1" stroke="#ddd" stroke-width="1.3" fill="none"/></svg>
<div class="t" style="left:139px;top:11.9px;font-size:13px;color:#e6e6e6;font-weight:400;">Filament</div>

<div class="t" style="left:-5px;top:33.8px;font-size:13px;color:#f2f2f2;font-weight:700;">Filament</div>
<div class="t" style="left:69px;top:33.8px;font-size:13px;color:#f2f2f2;font-weight:700;">Model</div>
<div class="t" style="left:154px;top:33.8px;font-size:13px;color:#f2f2f2;font-weight:700;">Flushed</div>
<div class="t" style="left:239px;top:33.8px;font-size:13px;color:#f2f2f2;font-weight:700;">Total</div>
<div class="a" style="left:0;top:52.5px;width:324px;height:1.3px;background:#c8c8c8"></div>
<div class="a" style="left:0;top:61.2px;width:5px;height:7px;background:#e8e8e8"></div>
<div class="t" style="left:13px;top:56.7px;font-size:13px;color:#e6e6e6;font-weight:400;">1</div>
<div class="t" style="left:69px;top:56.7px;font-size:13px;color:#e6e6e6;font-weight:400;">4.64 m</div>
<div class="t" style="left:69px;top:71.7px;font-size:13px;color:#e6e6e6;font-weight:400;">14.05 g</div>
<div class="t" style="left:154px;top:56.7px;font-size:13px;color:#e6e6e6;font-weight:400;">0.00 m</div>
<div class="t" style="left:154px;top:71.7px;font-size:13px;color:#e6e6e6;font-weight:400;">0.01 g</div>
<div class="t" style="left:239px;top:56.7px;font-size:13px;color:#e6e6e6;font-weight:400;">4.64 m</div>
<div class="t" style="left:239px;top:71.7px;font-size:13px;color:#e6e6e6;font-weight:400;">14.06 g</div>
<div class="a" style="left:0;top:97.2px;width:5px;height:7px;background:#2a2a2a"></div>
<div class="t" style="left:13px;top:92.7px;font-size:13px;color:#e6e6e6;font-weight:400;">2</div>
<div class="t" style="left:69px;top:92.7px;font-size:13px;color:#e6e6e6;font-weight:400;">0.19 m</div>
<div class="t" style="left:69px;top:107.7px;font-size:13px;color:#e6e6e6;font-weight:400;">0.57 g</div>
<div class="t" style="left:154px;top:92.7px;font-size:13px;color:#e6e6e6;font-weight:400;">0.24 m</div>
<div class="t" style="left:154px;top:107.7px;font-size:13px;color:#e6e6e6;font-weight:400;">0.72 g</div>
<div class="t" style="left:239px;top:92.7px;font-size:13px;color:#e6e6e6;font-weight:400;">0.42 m</div>
<div class="t" style="left:239px;top:107.7px;font-size:13px;color:#e6e6e6;font-weight:400;">1.28 g</div>
<div class="a" style="left:0;top:133.3px;width:5px;height:7px;background:#e03c1e"></div>
<div class="t" style="left:13px;top:128.8px;font-size:13px;color:#e6e6e6;font-weight:400;">3</div>
<div class="t" style="left:69px;top:128.8px;font-size:13px;color:#e6e6e6;font-weight:400;">0.12 m</div>
<div class="t" style="left:69px;top:143.8px;font-size:13px;color:#e6e6e6;font-weight:400;">0.37 g</div>
<div class="t" style="left:154px;top:128.8px;font-size:13px;color:#e6e6e6;font-weight:400;">0.24 m</div>
<div class="t" style="left:154px;top:143.8px;font-size:13px;color:#e6e6e6;font-weight:400;">0.72 g</div>
<div class="t" style="left:239px;top:128.8px;font-size:13px;color:#e6e6e6;font-weight:400;">0.36 m</div>
<div class="t" style="left:239px;top:143.8px;font-size:13px;color:#e6e6e6;font-weight:400;">1.08 g</div>
<div class="a" style="left:0;top:163.5px;width:312px;height:1.3px;background:#b8b8b8"></div>
<div class="t" style="left:-5px;top:168.7px;font-size:13px;color:#e6e6e6;font-weight:400;">Total</div>
<div class="t" style="left:69px;top:168.7px;font-size:13px;color:#e6e6e6;font-weight:400;">4.94 m</div>
<div class="t" style="left:69px;top:183.7px;font-size:13px;color:#e6e6e6;font-weight:400;">14.99 g</div>
<div class="t" style="left:154px;top:168.7px;font-size:13px;color:#e6e6e6;font-weight:400;">0.48 m</div>
<div class="t" style="left:154px;top:183.7px;font-size:13px;color:#e6e6e6;font-weight:400;">1.44 g</div>
<div class="t" style="left:239px;top:168.7px;font-size:13px;color:#e6e6e6;font-weight:400;">5.42 m</div>
<div class="t" style="left:239px;top:183.7px;font-size:13px;color:#e6e6e6;font-weight:400;">16.43 g</div>
<div class="t" style="left:-5px;top:204.8px;font-size:13px;color:#e6e6e6;font-weight:400;">Filament change times:</div>
<div class="t" style="left:140px;top:204.8px;font-size:13px;color:#e6e6e6;font-weight:400;">4</div>
<div class="t" style="left:-5px;top:223.5px;font-size:13px;color:#e6e6e6;font-weight:400;">Cost:</div>
<div class="t" style="left:34px;top:223.5px;font-size:13px;color:#e6e6e6;font-weight:400;">0.41</div>
<div class="t" style="left:-5px;top:251.0px;font-size:13px;color:#f2f2f2;font-weight:700;">Time Estimation</div>
<div class="a" style="left:0;top:269.5px;width:324px;height:1.3px;background:#c8c8c8"></div>
<div class="t" style="left:-5px;top:275.2px;font-size:13px;color:#e6e6e6;font-weight:400;">Prepare time:</div>
<div class="t" style="left:120.70000000000005px;top:275.2px;font-size:13px;color:#e6e6e6;font-weight:400;">6m57s</div>
<div class="t" style="left:-5px;top:293.9px;font-size:13px;color:#e6e6e6;font-weight:400;">Model printing time:</div>
<div class="t" style="left:120.70000000000005px;top:293.9px;font-size:13px;color:#e6e6e6;font-weight:400;">55m49s</div>
<div class="t" style="left:-5px;top:312.6px;font-size:13px;color:#e6e6e6;font-weight:400;">Total time:</div>
<div class="t" style="left:120.70000000000005px;top:312.6px;font-size:13px;color:#e6e6e6;font-weight:400;">1h3m</div>
<div class="t" style="left:-5px;top:335.7px;font-size:13px;color:#f2f2f2;font-weight:700;">Options</div>
<div class="t" style="left:262.5px;top:335.7px;font-size:13px;color:#f2f2f2;font-weight:700;">Display</div>
<div class="a" style="left:0;top:354px;width:324px;height:1.3px;background:#c8c8c8"></div>
<div class="a" style="left:0;top:361.3px;width:5.5px;height:8px;background:#3a48b8"></div>
<div class="t" style="left:14px;top:358.8px;font-size:13px;color:#e6e6e6;font-weight:400;">Travel</div>
<div class="a" style="left:284px;top:358px;width:15px;height:15px;background:#585858"></div>
<div class="a" style="left:0;top:382.3px;width:5.5px;height:8px;background:#c828d0"></div>
<div class="t" style="left:14px;top:379.8px;font-size:13px;color:#e6e6e6;font-weight:400;">Retract</div>
<div class="a" style="left:284px;top:379px;width:15px;height:15px;background:#585858"></div>
<div class="a" style="left:0;top:403.3px;width:5.5px;height:8px;background:#3aa0c8"></div>
<div class="t" style="left:14px;top:400.8px;font-size:13px;color:#e6e6e6;font-weight:400;">Unretract</div>
<div class="a" style="left:284px;top:400px;width:15px;height:15px;background:#585858"></div>
<div class="a" style="left:0;top:424.3px;width:5.5px;height:8px;background:#e0e000"></div>
<div class="t" style="left:14px;top:421.8px;font-size:13px;color:#e6e6e6;font-weight:400;">Wipe</div>
<div class="a" style="left:284px;top:421px;width:15px;height:15px;background:#585858"></div>
<div class="a" style="left:0;top:445.3px;width:5.5px;height:8px;background:#d8d8d8"></div>
<div class="t" style="left:14px;top:442.8px;font-size:13px;color:#e6e6e6;font-weight:400;">Seams</div>
<div class="a" style="left:284px;top:442px;width:15px;height:15px;background:#585858"></div>
<svg class="a" style="left:284px;top:442px" width="15" height="15"><path d="M2.5 7.5L6 11L12.5 4.5" stroke="#00ae42" stroke-width="2" fill="none"/></svg>
</div>
<div id="dialog" class="a">
<div class="a" style="left:0.0px;top:0.0px;width:470px;height:30px;background:#f5efef"></div>
<div class="a" style="left:0.0px;top:29.5px;width:470px;height:1px;background:#a9a9a9"></div>
<svg class="a" style="left:9.600000000000023px;top:5.700000000000003px" width="14" height="17"><rect width="14" height="17" fill="#00ae42"/><path d="M7 0V17 M0 10.5L14 7" stroke="#fff" stroke-width="1.2"/></svg>
<div class="t" style="left:30.3px;top:9.2px;font-size:12.2px;color:#1a1a1a;font-weight:400;">Send print job to</div>
<svg class="a" style="left:448px;top:8px" width="13" height="13"><path d="M1.5 1.5L11.5 11.5M11.5 1.5L1.5 11.5" stroke="#222" stroke-width="1.3"/></svg>
<div class="t" style="left:177.3px;top:48.7px;font-size:13.2px;color:#1a1a1a;font-weight:400;">My Sign Draft (2)</div>
<svg class="a" style="left:278px;top:47px" width="16" height="17"><path d="M3 11L11.5 2.5L13.5 4.5L5 13L2.5 13.5Z" fill="#333"/><rect x="1" y="15" width="13" height="2" rx="1" fill="#333"/></svg>
<svg class="a" style="left:0px;top:0px" width="470" height="400"><g transform="translate(-448 -48)"><g transform="translate(0 2.5)"><g transform="matrix(0.8125,-0.5875,0.8025,0.5796,587,231)"><rect x="-5" y="-5" width="90" height="167" rx="11" fill="#c2c2c2"/></g></g><g transform="matrix(0.8125,-0.5875,0.8025,0.5796,587,231)"><rect x="-5" y="-5" width="90" height="167" rx="11" fill="#f6f6f6" stroke="#c8c8c8" stroke-width="0.8"/><rect x="-1" y="-1" width="82" height="159" rx="8" fill="#ececec" stroke="#2a2a2a" stroke-width="2.8"/><g font-family="Liberation Serif" font-weight="700"><text x="9" y="36" font-size="25" fill="#d9361b" stroke="#d9361b" stroke-width="0.8">D</text><text x="29" y="33" font-size="15" fill="#222" stroke="#222" stroke-width="0.6">id</text><text x="12" y="69" font-size="25" fill="#d9361b" stroke="#d9361b" stroke-width="0.8">I</text><text x="11" y="102" font-size="25" fill="#d9361b" stroke="#d9361b" stroke-width="0.8">E</text><text x="30" y="99" font-size="15" fill="#222" stroke="#222" stroke-width="0.6">at</text><text x="11" y="136" font-size="25" fill="#d9361b" stroke="#d9361b" stroke-width="0.8">T</text><text x="30" y="134" font-size="15" fill="#222" stroke="#222" stroke-width="0.6">hat?</text></g></g></g></svg>
<svg class="a" style="left:122px;top:348px" width="19" height="19"><circle cx="9.5" cy="9.5" r="8" stroke="#00ae42" stroke-width="1.4" fill="none" stroke-dasharray="44 6" transform="rotate(100 9.5 9.5)"/><path d="M9 5V10.5H13" stroke="#00ae42" stroke-width="1.4" fill="none"/></svg>
<div class="t" style="left:150.6px;top:348.6px;font-size:15.6px;color:#1a1a1a;font-weight:400;">1h3m</div>
<svg class="a" style="left:260px;top:348.2px" width="20" height="18"><g stroke="#00ae42" stroke-width="1.1" fill="none" stroke-linejoin="round"><path d="M3.5 5L11.5 1Q13.5 0.5 14.5 2.5L6.5 6.8Q4.5 7.2 3.5 5Z"/><path d="M3.5 5V9 M6.5 6.8V10.5 M14.5 2.5V6"/><path d="M1 8.5L3.5 7.5 M1 8.5Q0.5 11 1.5 12L7 15.5Q8 16 8.5 15.5L17 11Q17.5 10 17 8L14.5 6.2"/><path d="M6.5 10.5L16.5 5.8 M8.5 15.5V11.5 M4.5 13.2V9.5 M8.5 11.5L17 7.5"/></g></svg>
<div class="t" style="left:296.7px;top:348.8px;font-size:15.3px;color:#1a1a1a;font-weight:400;">16.43 g</div>
<div class="a" style="left:48.0px;top:385.5px;width:15px;height:15px;border:1px solid #cfcfcf;border-radius:50%"></div>
<div class="t" style="left:52.0px;top:388.2px;font-size:11px;color:#00ae42;font-weight:700;">?</div>
<div class="a" style="left:83.2px;top:376.0px;width:63px;height:34px;border-radius:5px;overflow:hidden;border:1px solid #9a9a9a;background:linear-gradient(180deg,#fff 0,#fff 52%,#fff 52%)"></div>
<div class="t" style="left:103.2px;top:379.8px;font-size:13px;color:#333;font-weight:400;">PLA</div>
<div class="t" style="left:108.2px;top:396.5px;font-size:11.5px;color:#333;font-weight:400;">A3</div>
<svg class="a" style="left:129.20000000000005px;top:401px" width="9" height="5"><path d="M1 1L4.5 4L8 1" stroke="#999" stroke-width="1" fill="none"/></svg>
<div class="a" style="left:161.0px;top:376.0px;width:63px;height:34px;border-radius:5px;overflow:hidden;border:none;background:linear-gradient(180deg,#333333 0,#333333 52%,#161616 52%)"></div>
<div class="t" style="left:181.0px;top:379.8px;font-size:13px;color:#fff;font-weight:400;">PLA</div>
<div class="t" style="left:186.0px;top:396.5px;font-size:11.5px;color:#fff;font-weight:400;">A1</div>
<svg class="a" style="left:207px;top:401px" width="9" height="5"><path d="M1 1L4.5 4L8 1" stroke="#ddd" stroke-width="1" fill="none"/></svg>
<div class="a" style="left:238.0px;top:376.0px;width:63px;height:34px;border-radius:5px;overflow:hidden;border:none;background:linear-gradient(180deg,#e03c1a 0,#e03c1a 52%,#f6a643 52%)"></div>
<div class="t" style="left:258.0px;top:379.8px;font-size:13px;color:#fff;font-weight:400;">PLA</div>
<div class="t" style="left:263.0px;top:396.5px;font-size:11.5px;color:#333;font-weight:400;">A2</div>
<svg class="a" style="left:284px;top:401px" width="9" height="5"><path d="M1 1L4.5 4L8 1" stroke="#d88" stroke-width="1" fill="none"/></svg>
<svg class="a" style="left:197px;top:418px" width="16" height="16"><path d="M13.5 6A6 6 0 0 0 2.2 6 M2.5 10A6 6 0 0 0 13.8 10" stroke="#00ae42" stroke-width="1.4" fill="none"/><path d="M14.5 3V6.5H11 M1.5 13V9.5H5" stroke="#00ae42" stroke-width="1.2" fill="none"/><path d="M5.5 11L8 4.5L10.5 11 M6.5 8.5H9.5" stroke="#00ae42" stroke-width="1.2" fill="none"/></svg>
<div class="t" style="left:216.5px;top:420.6px;font-size:11.9px;color:#00ae42;font-weight:700;">Auto Refill</div>
<div class="a" style="left:30.0px;top:448.0px;width:410px;height:1px;background:#e6e6e6"></div>
<div class="t" style="left:35.2px;top:466.9px;font-size:15.2px;color:#1a1a1a;font-weight:700;">Printer</div>
<div class="a" style="left:100.7px;top:461.0px;width:251px;height:33px;border:1.5px solid #00ae42;background:#eefaf1"></div>
<svg class="a" style="left:108px;top:475px" width="11" height="7"><path d="M1 1L5.5 5L10 1" stroke="#999" stroke-width="1" fill="none"/></svg>
<div class="t" style="left:122.0px;top:468.4px;font-size:16.1px;color:#1a1a1a;font-weight:400;">3DP-030-380</div>
<div class="a" style="left:362.0px;top:466.2px;width:73px;height:23px;border-radius:12px;background:#00ae42"></div>
<div class="t" style="left:372.0px;top:469.2px;font-size:15.1px;color:#fff;font-weight:400;">Refresh</div>
<div class="t" style="left:55.0px;top:505.8px;font-size:13.8px;color:#f47a24;font-weight:400;">The selected printer is incompatible with the chosen printer</div>
<div class="t" style="left:211.0px;top:520.3px;font-size:13.8px;color:#f47a24;font-weight:400;">presets.</div>
<div class="a" style="left:77.0px;top:559.0px;width:16px;height:16px;background:#00ae42;border-radius:1px"></div>
<svg class="a" style="left:77px;top:559px" width="16" height="16"><path d="M3.5 8L7 11.5L13 5" stroke="#fff" stroke-width="1.4" fill="none"/></svg>
<div class="t" style="left:105.4px;top:560.1px;font-size:13.2px;color:#262626;font-weight:400;">Bed leveling</div>
<div class="a" style="left:246.0px;top:559.0px;width:16px;height:16px;border:1px solid #8a8a8a;border-radius:1px;background:#fff"></div>
<div class="t" style="left:274.0px;top:560.5px;font-size:12.8px;color:#262626;font-weight:400;">Flow Dynamics Cal...</div>
<div class="a" style="left:77.0px;top:587.0px;width:16px;height:16px;border:1px solid #8a8a8a;border-radius:1px;background:#fff"></div>
<div class="t" style="left:105.4px;top:587.5px;font-size:13.2px;color:#262626;font-weight:400;">Timelapse</div>
<div class="a" style="left:246.0px;top:587.0px;width:16px;height:16px;background:#00ae42;border-radius:1px"></div>
<svg class="a" style="left:246px;top:587px" width="16" height="16"><path d="M3.5 8L7 11.5L13 5" stroke="#fff" stroke-width="1.4" fill="none"/></svg>
<div class="t" style="left:274.0px;top:587.5px;font-size:13.2px;color:#262626;font-weight:400;">Enable AMS</div>
<div class="a" style="left:30.0px;top:620.0px;width:410px;height:1px;background:#e6e6e6"></div>
<div class="t" style="left:83.4px;top:635.0px;font-size:15.8px;color:#1a6fd8;font-weight:400;text-decoration:underline">Click here if you can&#39;t connect to the printer</div>
<div class="a" style="left:352.0px;top:661.6px;width:68px;height:30px;border-radius:13px;background:#8d8d8d"></div>
<div class="t" style="left:368.0px;top:665.3px;font-size:15px;color:#fff;font-weight:400;">Send</div>
</div>

<div id="taskbar" class="a">
<svg class="a" style="left:18px;top:10px" width="28" height="22"><defs><linearGradient id="cl" x1="0" y1="0" x2="0" y2="1"><stop offset="0" stop-color="#e6f0ff"/><stop offset="1" stop-color="#8fb2ea"/></linearGradient></defs><path d="M5 19Q1 19 1 15.5Q1 12 5 12Q6 6 12 6Q17 6 19 10Q24 10 24 14.5Q24 19 19.5 19Z" fill="url(#cl)"/></svg>
<div class="a" style="left:31px;top:8px;width:15px;height:15px;border-radius:50%;background:#c42b1c"></div>
<div class="t" style="left:35.5px;top:10.6px;font-size:10.5px;color:#fff;font-weight:400;">1</div>
<div class="t" style="left:51.0px;top:9.8px;font-size:11px;color:#fff;font-weight:700;">7°F</div>
<div class="t" style="left:51.0px;top:25.2px;font-size:12.2px;color:#d8d8d8;font-weight:400;">Cloudy</div>
<svg class="a" style="left:362px;top:12px" width="24" height="24"><defs><linearGradient id="wg" x1="0" y1="0" x2="1" y2="1"><stop offset="0" stop-color="#5ad0ff"/><stop offset="1" stop-color="#1a8ae0"/></linearGradient></defs><rect x="0" y="0" width="11.3" height="11.3" fill="url(#wg)"/><rect x="12.7" y="0" width="11.3" height="11.3" fill="url(#wg)"/><rect x="0" y="12.7" width="11.3" height="11.3" fill="url(#wg)"/><rect x="12.7" y="12.7" width="11.3" height="11.3" fill="url(#wg)"/></svg>
<div class="a" style="left:399px;top:9px;width:218px;height:30px;border-radius:15px;background:#f2f2f2"></div>
<svg class="a" style="left:409px;top:15px" width="18" height="18"><circle cx="7.5" cy="7.5" r="5.8" stroke="#222" stroke-width="1.6" fill="none"/><path d="M11.8 11.8L16.5 16.5" stroke="#222" stroke-width="1.8"/></svg>
<div class="t" style="left:435.4px;top:18.1px;font-size:13.5px;color:#5c5c5c;font-weight:400;">Search</div>
<svg class="a" style="left:570px;top:14px" width="18" height="20"><circle cx="9" cy="10" r="7" fill="#f0a060"/><circle cx="9" cy="10" r="5" fill="#fde8d8"/><path d="M9 6V10L11 11.5" stroke="#c04040" stroke-width="1" fill="none"/><circle cx="3.5" cy="3.5" r="2.5" fill="#f0b030"/><circle cx="14.5" cy="3.5" r="2.5" fill="#f0b030"/><rect x="5" y="17" width="8" height="2" fill="#f0a060"/></svg>
<svg class="a" style="left:590px;top:14px" width="18" height="20"><rect x="2" y="7" width="14" height="12" fill="#e07050"/><rect x="1" y="5" width="16" height="4" fill="#f08060"/><rect x="8" y="5" width="2.5" height="14" fill="#d02020"/><path d="M9 5Q5 0 4 4Q5 5 9 5Q13 5 14 4Q13 0 9 5" fill="#d02020"/></svg>
<svg class="a" style="left:630px;top:12px" width="26" height="24"><rect x="0.5" y="7" width="16" height="15" rx="1" fill="#5a5a5a"/><rect x="7" y="1" width="17" height="15" rx="1" fill="#e8e8e8"/></svg>
<svg class="a" style="left:674px;top:13px" width="24" height="24"><defs><linearGradient id="tm" x1="0" y1="0" x2="1" y2="1"><stop offset="0" stop-color="#7b7fd8"/><stop offset="1" stop-color="#5b4fc8"/></linearGradient></defs><path d="M12 1A11 11 0 1 1 5 20.5L1 22.5L2.5 17.5A11 11 0 0 1 12 1Z" fill="url(#tm)"/><rect x="6" y="8" width="9" height="8" rx="1.5" fill="#fff"/><path d="M15 10.5L19 8V16L15 13.5Z" fill="#fff"/></svg>
<svg class="a" style="left:718px;top:11px" width="25" height="23"><path d="M1 3Q1 1 3 1H9L11.5 3.5H22Q24 3.5 24 5.5V20Q24 22 22 22H3Q1 22 1 20Z" fill="#f5c542"/><path d="M1 7H24V20Q24 22 22 22H3Q1 22 1 20Z" fill="#ffd766"/><rect x="7" y="14" width="11" height="5" rx="1" fill="#2b8ee0"/></svg>
<svg class="a" style="left:762px;top:12px" width="24" height="24"><defs><linearGradient id="ed" x1="0" y1="0" x2="1" y2="1"><stop offset="0" stop-color="#35c1f1"/><stop offset="0.6" stop-color="#1b8ad8"/><stop offset="1" stop-color="#0c59a4"/></linearGradient></defs><circle cx="12" cy="12" r="11.5" fill="url(#ed)"/><path d="M12 0.5A11.5 11.5 0 0 1 23.5 12Q23.5 16 19 16Q14 16 14 12.5Q14 10 17 10Q14 5 9 6.5Q3 9 5 16Q2 12 3 8A11.5 11.5 0 0 1 12 0.5Z" fill="#5fd36d"/><circle cx="13" cy="13" r="4" fill="#1b6fc0"/></svg>
<div class="a" style="left:770px;top:41px;width:8px;height:3px;border-radius:2px;background:#9a9a9a"></div>
<svg class="a" style="left:806px;top:11px" width="24" height="25"><path d="M7 6V4Q7 1 12 1Q17 1 17 4V6" stroke="#2ea0e0" stroke-width="2" fill="none"/><rect x="1" y="6" width="22" height="18" rx="3" fill="#f4f4f4"/><rect x="7.5" y="10.5" width="4" height="4" fill="#f25022"/><rect x="12.5" y="10.5" width="4" height="4" fill="#7fba00"/><rect x="7.5" y="15.5" width="4" height="4" fill="#00a4ef"/><rect x="12.5" y="15.5" width="4" height="4" fill="#ffb900"/></svg>
<svg class="a" style="left:850px;top:15px" width="24" height="18"><path d="M1 3L12 11L23 3V17H18V8L12 12.5L6 8V17H1Z" fill="#ea4335"/><path d="M1 3V17H6V7Z" fill="#4285f4"/><path d="M23 3V17H18V7Z" fill="#34a853"/><path d="M18 7L23 3V6Z" fill="#fbbc04"/></svg>
<svg class="a" style="left:894px;top:12px" width="24" height="24"><rect x="0" y="0" width="24" height="24" fill="#107c10"/><circle cx="12" cy="12" r="9" fill="#fff"/><path d="M5 6Q9 9 12 12Q15 9 19 6Q17 13 12 14Q7 13 5 6Z M5 19Q9 14 12 12Q15 14 19 19" fill="#107c10"/><path d="M5.5 18.5Q8.5 13 12 12Q15.5 13 18.5 18.5Q15 21 12 21Q9 21 5.5 18.5Z" fill="#107c10"/></svg>
<div class="a" style="left:930px;top:4px;width:40px;height:39px;border-radius:4px;background:#2f2b2c"></div>
<svg class="a" style="left:938px;top:12px" width="24" height="24"><rect x="0" y="0" width="24" height="24" rx="3" fill="#00ae42"/><path d="M6 5H11V19H6Z M13 5H18V19H13Z" fill="#fff"/><path d="M6 13L11 11.5 M13 11L18 9.5" stroke="#00ae42" stroke-width="1.2"/></svg>
<div class="a" style="left:943px;top:41px;width:15px;height:3px;border-radius:2px;background:#e8b8b8"></div>
<svg class="a" style="left:982px;top:12px" width="24" height="24"><circle cx="12" cy="12" r="11.5" fill="#db4437"/><path d="M12 12L22 6.5A11.5 11.5 0 0 1 12 23.5Z" fill="#fcc934"/><path d="M12 12L12 23.5A11.5 11.5 0 0 1 2 6.5Z" fill="#1e8e3e"/><path d="M12 0.5A11.5 11.5 0 0 1 22 6.5H12Z" fill="#db4437"/><circle cx="12" cy="12" r="5.5" fill="#fff"/><circle cx="12" cy="12" r="4.2" fill="#1a73e8"/></svg>
<div class="a" style="left:990px;top:41px;width:8px;height:3px;border-radius:2px;background:#9a9a9a"></div>
<svg class="a" style="left:1085px;top:18px" width="14" height="9"><path d="M1.5 7.5L7 2L12.5 7.5" stroke="#eee" stroke-width="1.4" fill="none"/></svg>
<svg class="a" style="left:1115px;top:14px" width="19" height="18"><path d="M4 15Q1 15 1 12Q1 9 4 9Q5 5 9.5 5Q13 5 14.5 8Q18 8 18 11.5Q18 15 14.5 15Z" fill="#9a9a9a"/><path d="M2 2L16 17" stroke="#ddd" stroke-width="1.5"/></svg>
<svg class="a" style="left:1147px;top:15px" width="16" height="17"><path d="M14.5 1.5L1.5 7.5L8 9L9.5 15.5Z" stroke="#d8b8b8" stroke-width="1.3" fill="none" stroke-linejoin="round"/></svg>
<svg class="a" style="left:1179px;top:15px" width="18" height="17"><path d="M17 8.5Q17 7 15 7H11L6.5 1.5H5L7 7H3.5L2 5H1L2 8.5L1 12H2L3.5 10H7L5 15.5H6.5L11 10H15Q17 10 17 8.5Z" stroke="#eee" stroke-width="1.2" fill="none" stroke-linejoin="round"/></svg>
<svg class="a" style="left:1203px;top:15px" width="19" height="17"><path d="M1.5 6H4.5L9 2V15L4.5 11H1.5Z" stroke="#eee" stroke-width="1.2" fill="none" stroke-linejoin="round"/><path d="M11.5 6Q13 8.5 11.5 11 M13.5 4Q16 8.5 13.5 13 M15.5 2Q19 8.5 15.5 15" stroke="#eee" stroke-width="1.2" fill="none"/></svg>
<svg class="a" style="left:1227px;top:15px" width="19" height="17"><rect x="1.5" y="4.5" width="14" height="10" rx="1.5" stroke="#eee" stroke-width="1.3" fill="none"/><rect x="16" y="7.5" width="2" height="4" fill="#eee"/><path d="M6 2L3.5 8.5H7L5 13" stroke="#eee" stroke-width="1.2" fill="none"/></svg>
<div class="t" style="left:1279.5px;top:9.2px;font-size:11.7px;color:#fff;font-weight:400;">9:29 PM</div>
<div class="t" style="left:1261.6px;top:24.8px;font-size:12.4px;color:#fff;font-weight:400;">11/24/2023</div>
<svg class="a" style="left:1330px;top:14px" width="16" height="19"><path d="M8 1.5Q3 1.5 3 7V11L1 14H15L13 11V7Q13 1.5 8 1.5Z" fill="#f0c8c0"/><path d="M6 16Q8 18.5 10 16Z" fill="#f0c8c0"/></svg>
</div>

</body></html>
